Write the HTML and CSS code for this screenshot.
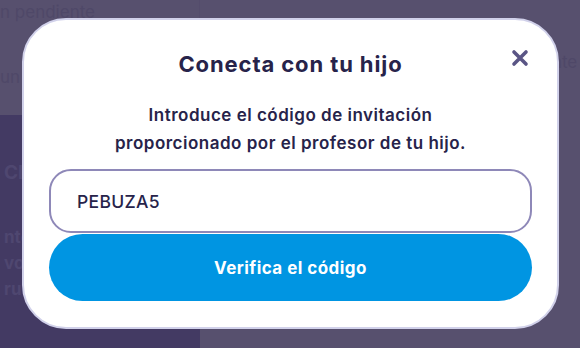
FILE: index.html
```html
<!DOCTYPE html>
<html lang="es">
<head>
<meta charset="utf-8">
<title>Conecta con tu hijo</title>
<link rel="stylesheet" href="styles.css">
</head>
<body>
<div class="page">
  <div class="backdrop">
    <div class="top">
      <div class="top-left">
        <p class="faint l1">n pendiente</p>
        <p class="faint l2">un</p>
      </div>
      <div class="top-right">
        <p class="faint r1">ente</p>
      </div>
    </div>
    <div class="bottom">
      <div class="card">
        <p class="faint c1">Cl</p>
        <p class="faint c2">nte<br>vos<br>ruc</p>
      </div>
      <div class="rest"></div>
    </div>
  </div>

  <div class="modal">
    <button class="close" aria-label="Cerrar">
      <svg width="18" height="18" viewBox="0 0 18 18"><path d="M3 3 L15 15 M15 3 L3 15" stroke="#5a5585" stroke-width="3.6" stroke-linecap="round"/></svg>
    </button>
    <h2 class="title">Conecta con tu hijo</h2>
    <p class="desc">Introduce el código de invitación<br>proporcionado por el profesor de tu hijo.</p>
    <div class="field">PEBUZA5</div>
    <button class="submit">Verifica el código</button>
  </div>
</div>
</body>
</html>
```

FILE: styles.css
```css
* { box-sizing: border-box; }
html, body { margin: 0; padding: 0; }
body {
  width: 580px;
  height: 348px;
  overflow: hidden;
  font-family: Inter, "Open Sans", sans-serif;
  background: #57506e;
}
.page {
  position: relative;
  width: 580px;
  height: 348px;
}
.backdrop {
  display: flex;
  flex-direction: column;
  height: 100%;
}
.top {
  display: flex;
  height: 115px;
  background: #57506e;
}
.top-left {
  width: 200px;
  border-right: 1px solid #544c6c;
}
.top-right { flex: 1; }
.faint {
  margin: 0;
  color: #4f4868;
  font-size: 17px;
}
.l1 { padding-top: 2px; }
.l2 { padding-top: 45px; }
.r1 { padding: 52px 0 0 342px; }
.bottom {
  display: flex;
  flex: 1;
}
.card {
  width: 200px;
  background: #433a63;
  padding: 0 0 0 4px;
}
.c1 { font-weight: 700; font-size: 19px; padding-top: 46px; color: #4f4770; }
.c2 { font-weight: 700; padding-top: 40px; line-height: 26px; color: #4f4770; }
.rest { flex: 1; background: #57506e; }

.modal {
  position: absolute;
  left: 22px;
  top: 18px;
  width: 537px;
  height: 311px;
  background: #fff;
  border: 2px solid #d1d1ea;
  border-radius: 44px;
  padding: 26px 25px 0 25px;
  display: flex;
  flex-direction: column;
  align-items: stretch;
}
.close {
  position: absolute;
  right: 28px;
  top: 29px;
  background: none;
  border: 0;
  padding: 0;
  width: 18px;
  height: 18px;
  display: flex;
}
.title {
  margin: 0;
  text-align: center;
  font-size: 22px;
  font-weight: 700;
  letter-spacing: 0.9px;
  color: #27234a;
  line-height: 36px;
}
.desc {
  margin: 19px 0 0;
  text-align: center;
  font-size: 17px;
  font-weight: 600;
  letter-spacing: 0.5px;
  color: #27234a;
  line-height: 28px;
}
.field {
  margin-top: 12px;
  height: 64px;
  border: 2px solid #8e88b8;
  border-radius: 22px;
  padding: 0 0 0 26px;
  display: flex;
  align-items: center;
  font-size: 17.5px;
  font-weight: 500;
  letter-spacing: 0.3px;
  color: #27234a;
}
.submit {
  margin-top: 1px;
  height: 67px;
  border: 0;
  border-radius: 34px;
  background: #0095e2;
  color: #fff;
  font-family: inherit;
  font-size: 17px;
  font-weight: 700;
  letter-spacing: 0.45px;
}
```
